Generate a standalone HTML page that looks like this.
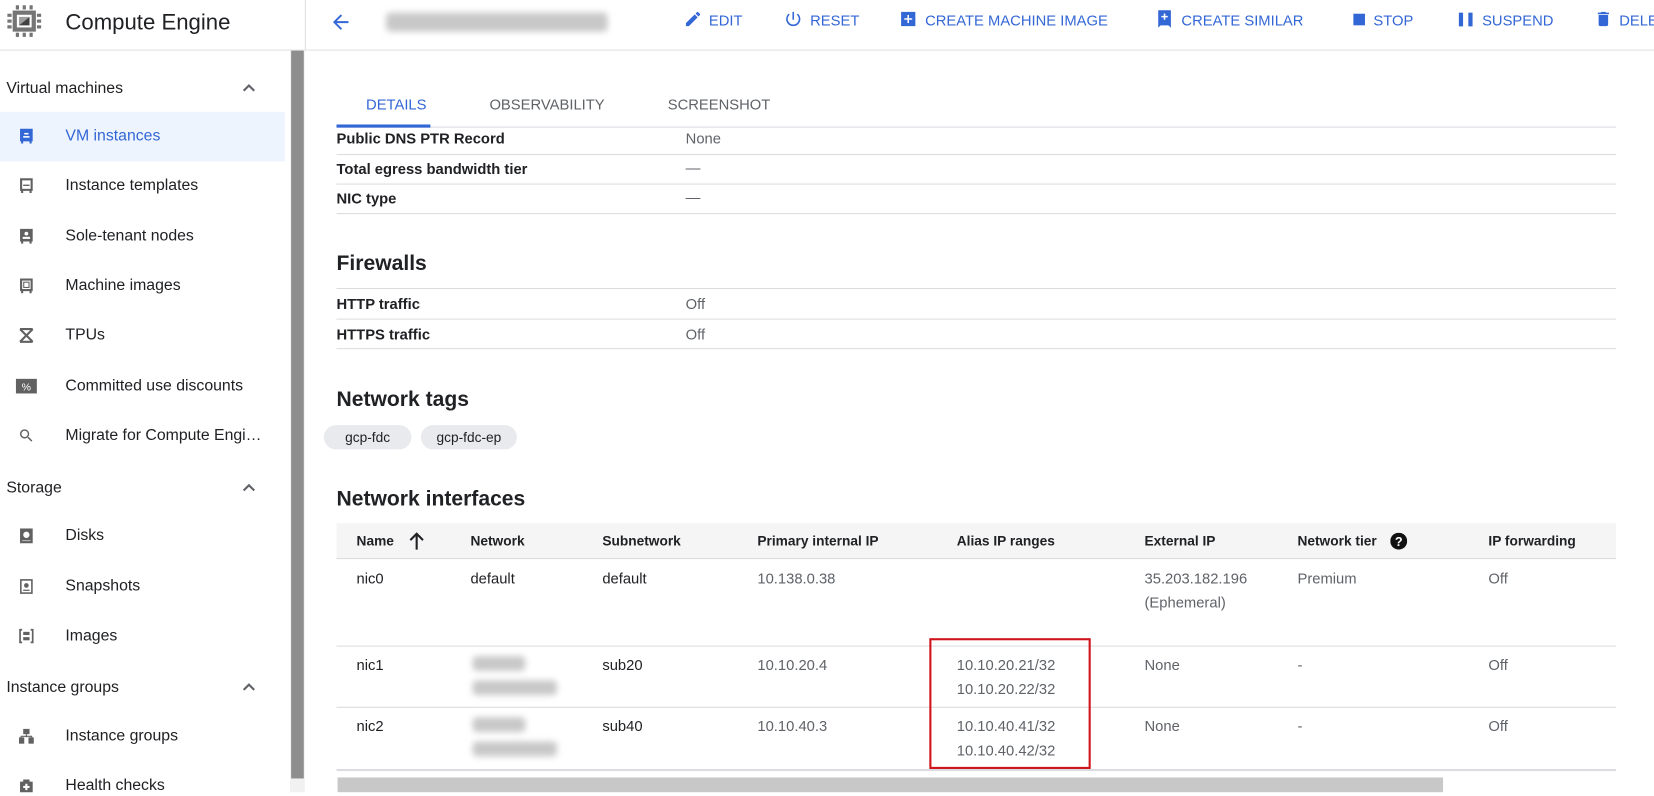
<!DOCTYPE html>
<html><head><meta charset="utf-8">
<style>
*{margin:0;padding:0;box-sizing:border-box}
html,body{width:1654px;height:792px;overflow:hidden;background:#fff;font-family:"Liberation Sans",Arial,sans-serif;color:#202124}
#w{position:absolute;left:0;top:0;width:1568px;height:751px;transform:scale(1.05485);transform-origin:0 0}
.a{position:absolute;white-space:nowrap;line-height:20px}
.ln{position:absolute;height:1px;background:#dadce0}
.nav{font-size:15px;color:#202124}
.ic{position:absolute}
.act{font-size:14px;color:#3367d6;font-weight:500}
.lab{font-size:14px;font-weight:bold}
.val{font-size:14px;color:#5f6368}
.h{font-size:20px;font-weight:bold;color:#202124}
.th{font-size:13px;font-weight:bold;color:#202124}
.td{font-size:14px;color:#202124}
.tv{font-size:14px;color:#5f6368}
.blur{position:absolute;background:#c8c8c8;filter:blur(3px);border-radius:4px}
</style></head><body><div id="w">
<div class="ln" style="left:0;top:47px;width:1568px;background:#e0e0e0"></div>
<div class="ln" style="left:289px;top:0;width:1px;height:47px;background:#e0e0e0"></div>
<svg class="ic" style="left:5px;top:2px" width="36" height="36" viewBox="0 0 36 36">
<rect x="7" y="8" width="22" height="20" fill="#757575"/><rect x="11" y="12" width="14" height="12" fill="#fff"/>
<polygon points="13,14 23,14 13,22" fill="#9e9e9e"/><polygon points="23,14 23,22 13,22" fill="#424242"/>
<g fill="#757575"><rect x="10" y="3" width="3" height="4"/><rect x="16.5" y="3" width="3" height="4"/><rect x="23" y="3" width="3" height="4"/>
<rect x="10" y="29" width="3" height="4"/><rect x="16.5" y="29" width="3" height="4"/><rect x="23" y="29" width="3" height="4"/>
<rect x="2" y="11" width="4" height="3"/><rect x="2" y="16.5" width="4" height="3"/><rect x="2" y="22" width="4" height="3"/>
<rect x="30" y="11" width="4" height="3"/><rect x="30" y="16.5" width="4" height="3"/><rect x="30" y="22" width="4" height="3"/></g></svg>
<div class="a" style="left:62px;top:8px;font-size:21px;line-height:28px">Compute Engine</div>
<svg class="ic" style="left:312px;top:10px" width="22" height="22" viewBox="0 0 24 24"><path d="M20 11H7.8l5.6-5.6L12 4l-8 8 8 8 1.4-1.4L7.8 13H20z" fill="#3367d6"/></svg>
<div class="blur" style="left:366px;top:12px;width:210px;height:18px"></div>
<svg class="ic" style="left:648px;top:9px" width="18" height="18" viewBox="0 0 24 24"><path d="M3 17.25V21h3.75L17.8 9.9l-3.7-3.7zM20.7 7c.4-.4.4-1 0-1.4l-2.3-2.3c-.4-.4-1-.4-1.4 0l-1.8 1.8 3.7 3.7z" fill="#3367d6"/></svg>
<div class="a act" style="left:672px;top:9px">EDIT</div>
<svg class="ic" style="left:743px;top:9px" width="18" height="18" viewBox="0 0 24 24"><path d="M13 3h-2v10h2zm4.8 2.2l-1.4 1.4A7 7 0 1 1 7.6 6.6L6.2 5.2A9 9 0 1 0 17.8 5.2z" fill="#3367d6"/></svg>
<div class="a act" style="left:768px;top:9px">RESET</div>
<svg class="ic" style="left:852px;top:9px" width="18" height="18" viewBox="0 0 24 24"><path d="M3 3h18v18H3z" fill="#3367d6"/><path d="M11 7h2v4h4v2h-4v4h-2v-4H7v-2h4z" fill="#fff"/></svg>
<div class="a act" style="left:877px;top:9px">CREATE MACHINE IMAGE</div>
<svg class="ic" style="left:1095px;top:8px" width="18" height="20" viewBox="0 0 24 26"><path d="M4 2h16v22l-3-3H7l-3 3z" fill="#3367d6"/><path d="M11 6h2v3h3v2h-3v3h-2v-3H8V9h3z" fill="#fff"/></svg>
<div class="a act" style="left:1120px;top:9px">CREATE SIMILAR</div>
<div style="position:absolute;left:1283px;top:13px;width:11px;height:11px;background:#3367d6"></div>
<div class="a act" style="left:1302px;top:9px">STOP</div>
<div style="position:absolute;left:1383px;top:12px;width:4px;height:13px;background:#3367d6"></div>
<div style="position:absolute;left:1392px;top:12px;width:4px;height:13px;background:#3367d6"></div>
<div class="a act" style="left:1405px;top:9px">SUSPEND</div>
<svg class="ic" style="left:1511px;top:9px" width="18" height="18" viewBox="0 0 24 24"><path d="M6 19c0 1.1.9 2 2 2h8c1.1 0 2-.9 2-2V7H6zM19 4h-3.5l-1-1h-5l-1 1H5v2h14z" fill="#3367d6"/></svg>
<div class="a act" style="left:1535px;top:9px">DELETE</div>

<div style="position:absolute;left:275px;top:48px;width:14px;height:703px;background:#f1f1f1"></div>
<div style="position:absolute;left:276px;top:48px;width:12px;height:690px;background:#8e8e8e"></div>
<div style="position:absolute;left:0;top:106px;width:270px;height:47px;background:#e8f0fe;opacity:.75"></div>
<div class="a nav" style="left:6px;top:74px">Virtual machines</div>
<div class="a nav" style="left:6px;top:453px">Storage</div>
<div class="a nav" style="left:6px;top:642px">Instance groups</div>
<svg class="ic" style="left:229px;top:78px" width="14" height="10" viewBox="0 0 14 10"><path d="M2 8l5-5 5 5" stroke="#5f6368" stroke-width="2" fill="none"/></svg>
<svg class="ic" style="left:229px;top:457px" width="14" height="10" viewBox="0 0 14 10"><path d="M2 8l5-5 5 5" stroke="#5f6368" stroke-width="2" fill="none"/></svg>
<svg class="ic" style="left:229px;top:646px" width="14" height="10" viewBox="0 0 14 10"><path d="M2 8l5-5 5 5" stroke="#5f6368" stroke-width="2" fill="none"/></svg>
<div class="a nav" style="left:62px;top:119px;color:#3367d6">VM instances</div>
<div class="a nav" style="left:62px;top:166px">Instance templates</div>
<div class="a nav" style="left:62px;top:214px">Sole-tenant nodes</div>
<div class="a nav" style="left:62px;top:261px">Machine images</div>
<div class="a nav" style="left:62px;top:308px">TPUs</div>
<div class="a nav" style="left:62px;top:356px">Committed use discounts</div>
<div class="a nav" style="left:62px;top:403px">Migrate for Compute Engi…</div>
<div class="a nav" style="left:62px;top:498px">Disks</div>
<div class="a nav" style="left:62px;top:546px">Snapshots</div>
<div class="a nav" style="left:62px;top:593px">Images</div>
<div class="a nav" style="left:62px;top:688px">Instance groups</div>
<div class="a nav" style="left:62px;top:735px">Health checks</div>
<svg class="ic" style="left:17px;top:121px" width="16" height="16" viewBox="0 0 16 16"><path d="M2 1h12v12H2zM3 13h2v2H3zM11 13h2v2h-2z" fill="#3367d6"/><rect x="6" y="5" width="4" height="1.5" fill="#fff"/><rect x="5" y="8" width="6" height="1.5" fill="#fff"/></svg>
<svg class="ic" style="left:17px;top:168px" width="16" height="16" viewBox="0 0 16 16"><path d="M2 1h12v12H2zM3 13h2v2H3zM11 13h2v2h-2z" fill="#616161"/><rect x="4" y="3" width="8" height="8" fill="#fff"/><rect x="5" y="7" width="6" height="1.3" fill="#616161"/></svg>
<svg class="ic" style="left:17px;top:216px" width="16" height="16" viewBox="0 0 16 16"><path d="M2 1h12v12H2zM3 13h2v2H3zM11 13h2v2h-2z" fill="#616161"/><circle cx="8" cy="5.5" r="1.8" fill="#fff"/><rect x="4.5" y="8.5" width="7" height="2" fill="#fff"/></svg>
<svg class="ic" style="left:17px;top:263px" width="16" height="16" viewBox="0 0 16 16"><path d="M2 1h12v12H2zM3 13h2v2H3zM11 13h2v2h-2z" fill="#616161"/><rect x="4" y="3" width="8" height="8" fill="#fff"/><rect x="5.5" y="4.5" width="5" height="5" fill="none" stroke="#616161"/></svg>
<svg class="ic" style="left:17px;top:310px" width="16" height="16" viewBox="0 0 16 16"><path d="M2 2l12 12M14 2L2 14M2 2h12M2 14h12" stroke="#616161" stroke-width="2" fill="none"/></svg>
<svg class="ic" style="left:15px;top:359px" width="20" height="14" viewBox="0 0 20 14"><rect x="0" y="0" width="20" height="14" fill="#616161"/><text x="10" y="11" font-size="10" fill="#fff" text-anchor="middle" font-family="Liberation Sans">%</text></svg>
<svg class="ic" style="left:17px;top:405px" width="16" height="16" viewBox="0 0 24 24"><path d="M15.5 14h-.8l-.3-.3A6.5 6.5 0 1 0 9.5 16a6.5 6.5 0 0 0 4.2-1.6l.3.3v.8l5 5 1.5-1.5zm-6 0a4.5 4.5 0 1 1 0-9 4.5 4.5 0 0 1 0 9z" fill="#616161"/></svg>
<svg class="ic" style="left:17px;top:500px" width="16" height="16" viewBox="0 0 16 16"><rect x="2" y="1" width="12" height="14" fill="#616161"/><circle cx="8" cy="7" r="3" fill="#fff"/><rect x="4" y="12" width="8" height="1" fill="#bbb"/></svg>
<svg class="ic" style="left:17px;top:548px" width="16" height="16" viewBox="0 0 16 16"><rect x="2" y="1" width="12" height="14" fill="#616161"/><rect x="3.5" y="2.5" width="9" height="11" fill="#fff"/><circle cx="8" cy="7" r="2.2" fill="#616161"/><rect x="5" y="11" width="6" height="1.2" fill="#616161"/></svg>
<svg class="ic" style="left:17px;top:595px" width="16" height="16" viewBox="0 0 16 16"><path d="M4 2H2v12h2M12 2h2v12h-2" stroke="#616161" stroke-width="1.6" fill="none"/><rect x="5" y="4" width="6" height="3" fill="#616161"/><rect x="5" y="9" width="6" height="3" fill="#616161"/></svg>
<svg class="ic" style="left:17px;top:690px" width="16" height="16" viewBox="0 0 16 16"><rect x="5" y="1" width="6" height="5" fill="#616161"/><rect x="1" y="9" width="5" height="6" fill="#616161"/><rect x="10" y="9" width="5" height="6" fill="#616161"/><path d="M8 6v3M3 9V8h10v1" stroke="#616161" fill="none"/></svg>
<svg class="ic" style="left:17px;top:737px" width="16" height="16" viewBox="0 0 16 16"><path d="M5 4V2h6v2h3v10H2V4z" fill="#616161"/><path d="M7 6h2v2h2v2H9v2H7v-2H5V8h2z" fill="#fff"/></svg>

<div class="a act" style="left:347px;top:89px;color:#3367d6">DETAILS</div>
<div class="a act" style="left:464px;top:89px;color:#5f6368">OBSERVABILITY</div>
<div class="a act" style="left:633px;top:89px;color:#5f6368">SCREENSHOT</div>
<div class="ln" style="left:319px;top:120px;width:1213px"></div>
<div style="position:absolute;left:319px;top:118px;width:89px;height:3px;background:#3367d6"></div>

<div class="a lab" style="left:319px;top:121px">Public DNS PTR Record</div><div class="a val" style="left:650px;top:121px">None</div>
<div class="ln" style="left:319px;top:146px;width:1213px"></div>
<div class="a lab" style="left:319px;top:150px">Total egress bandwidth tier</div><div class="a val" style="left:650px;top:149px">—</div>
<div class="ln" style="left:319px;top:174px;width:1213px"></div>
<div class="a lab" style="left:319px;top:178px">NIC type</div><div class="a val" style="left:650px;top:177px">—</div>
<div class="ln" style="left:319px;top:202px;width:1213px"></div>

<div class="a h" style="left:319px;top:240px">Firewalls</div>
<div class="ln" style="left:319px;top:273px;width:1213px"></div>
<div class="a lab" style="left:319px;top:278px">HTTP traffic</div><div class="a val" style="left:650px;top:278px">Off</div>
<div class="ln" style="left:319px;top:302px;width:1213px"></div>
<div class="a lab" style="left:319px;top:307px">HTTPS traffic</div><div class="a val" style="left:650px;top:307px">Off</div>
<div class="ln" style="left:319px;top:330px;width:1213px"></div>

<div class="a h" style="left:319px;top:369px">Network tags</div>
<div class="a" style="left:307px;top:403px;width:83px;height:23px;line-height:23px;border-radius:12px;background:#e8eaed;font-size:13px;text-align:center">gcp-fdc</div>
<div class="a" style="left:399px;top:403px;width:91px;height:23px;line-height:23px;border-radius:12px;background:#e8eaed;font-size:13px;text-align:center">gcp-fdc-ep</div>

<div class="a h" style="left:319px;top:463px">Network interfaces</div>
<div style="position:absolute;left:319px;top:496px;width:1213px;height:34px;background:#f5f5f5;border-bottom:1px solid #dadce0"></div>
<div class="a th" style="left:338px;top:503px">Name</div>
<svg class="ic" style="left:386px;top:503px" width="18" height="20" viewBox="0 0 18 20"><path d="M9 18V3M3 9l6-6 6 6" stroke="#202124" stroke-width="2" fill="none"/></svg>
<div class="a th" style="left:446px;top:503px">Network</div>
<div class="a th" style="left:571px;top:503px">Subnetwork</div>
<div class="a th" style="left:718px;top:503px">Primary internal IP</div>
<div class="a th" style="left:907px;top:503px">Alias IP ranges</div>
<div class="a th" style="left:1085px;top:503px">External IP</div>
<div class="a th" style="left:1230px;top:503px">Network tier</div>
<svg class="ic" style="left:1318px;top:505px" width="16" height="16" viewBox="0 0 16 16"><circle cx="8" cy="8" r="8" fill="#111"/><text x="8" y="12.5" font-size="12" font-weight="bold" fill="#fff" text-anchor="middle" font-family="Liberation Sans">?</text></svg>
<div class="a th" style="left:1411px;top:503px">IP forwarding</div>

<div class="a td" style="left:338px;top:538px">nic0</div>
<div class="a td" style="left:446px;top:538px">default</div>
<div class="a td" style="left:571px;top:538px">default</div>
<div class="a tv" style="left:718px;top:538px">10.138.0.38</div>
<div class="a tv" style="left:1085px;top:538px">35.203.182.196</div>
<div class="a tv" style="left:1085px;top:561px">(Ephemeral)</div>
<div class="a tv" style="left:1230px;top:538px">Premium</div>
<div class="a tv" style="left:1411px;top:538px">Off</div>
<div class="ln" style="left:319px;top:612px;width:1213px"></div>

<div class="a td" style="left:338px;top:620px">nic1</div>
<div class="blur" style="left:448px;top:622px;width:50px;height:14px"></div>
<div class="blur" style="left:448px;top:645px;width:80px;height:14px"></div>
<div class="a td" style="left:571px;top:620px">sub20</div>
<div class="a tv" style="left:718px;top:620px">10.10.20.4</div>
<div class="a tv" style="left:907px;top:620px">10.10.20.21/32</div>
<div class="a tv" style="left:907px;top:643px">10.10.20.22/32</div>
<div class="a tv" style="left:1085px;top:620px">None</div>
<div class="a tv" style="left:1230px;top:620px">-</div>
<div class="a tv" style="left:1411px;top:620px">Off</div>
<div class="ln" style="left:319px;top:670px;width:1213px"></div>

<div class="a td" style="left:338px;top:678px">nic2</div>
<div class="blur" style="left:448px;top:680px;width:50px;height:14px"></div>
<div class="blur" style="left:448px;top:703px;width:80px;height:14px"></div>
<div class="a td" style="left:571px;top:678px">sub40</div>
<div class="a tv" style="left:718px;top:678px">10.10.40.3</div>
<div class="a tv" style="left:907px;top:678px">10.10.40.41/32</div>
<div class="a tv" style="left:907px;top:701px">10.10.40.42/32</div>
<div class="a tv" style="left:1085px;top:678px">None</div>
<div class="a tv" style="left:1230px;top:678px">-</div>
<div class="a tv" style="left:1411px;top:678px">Off</div>
<div class="ln" style="left:319px;top:729px;width:1213px;height:2px"></div>
<div style="position:absolute;left:320px;top:737px;width:1048px;height:14px;background:#c8c8c8"></div>

<div style="position:absolute;left:881px;top:605px;width:153px;height:124px;border:2px solid #d0141b"></div>
</div></body></html>
